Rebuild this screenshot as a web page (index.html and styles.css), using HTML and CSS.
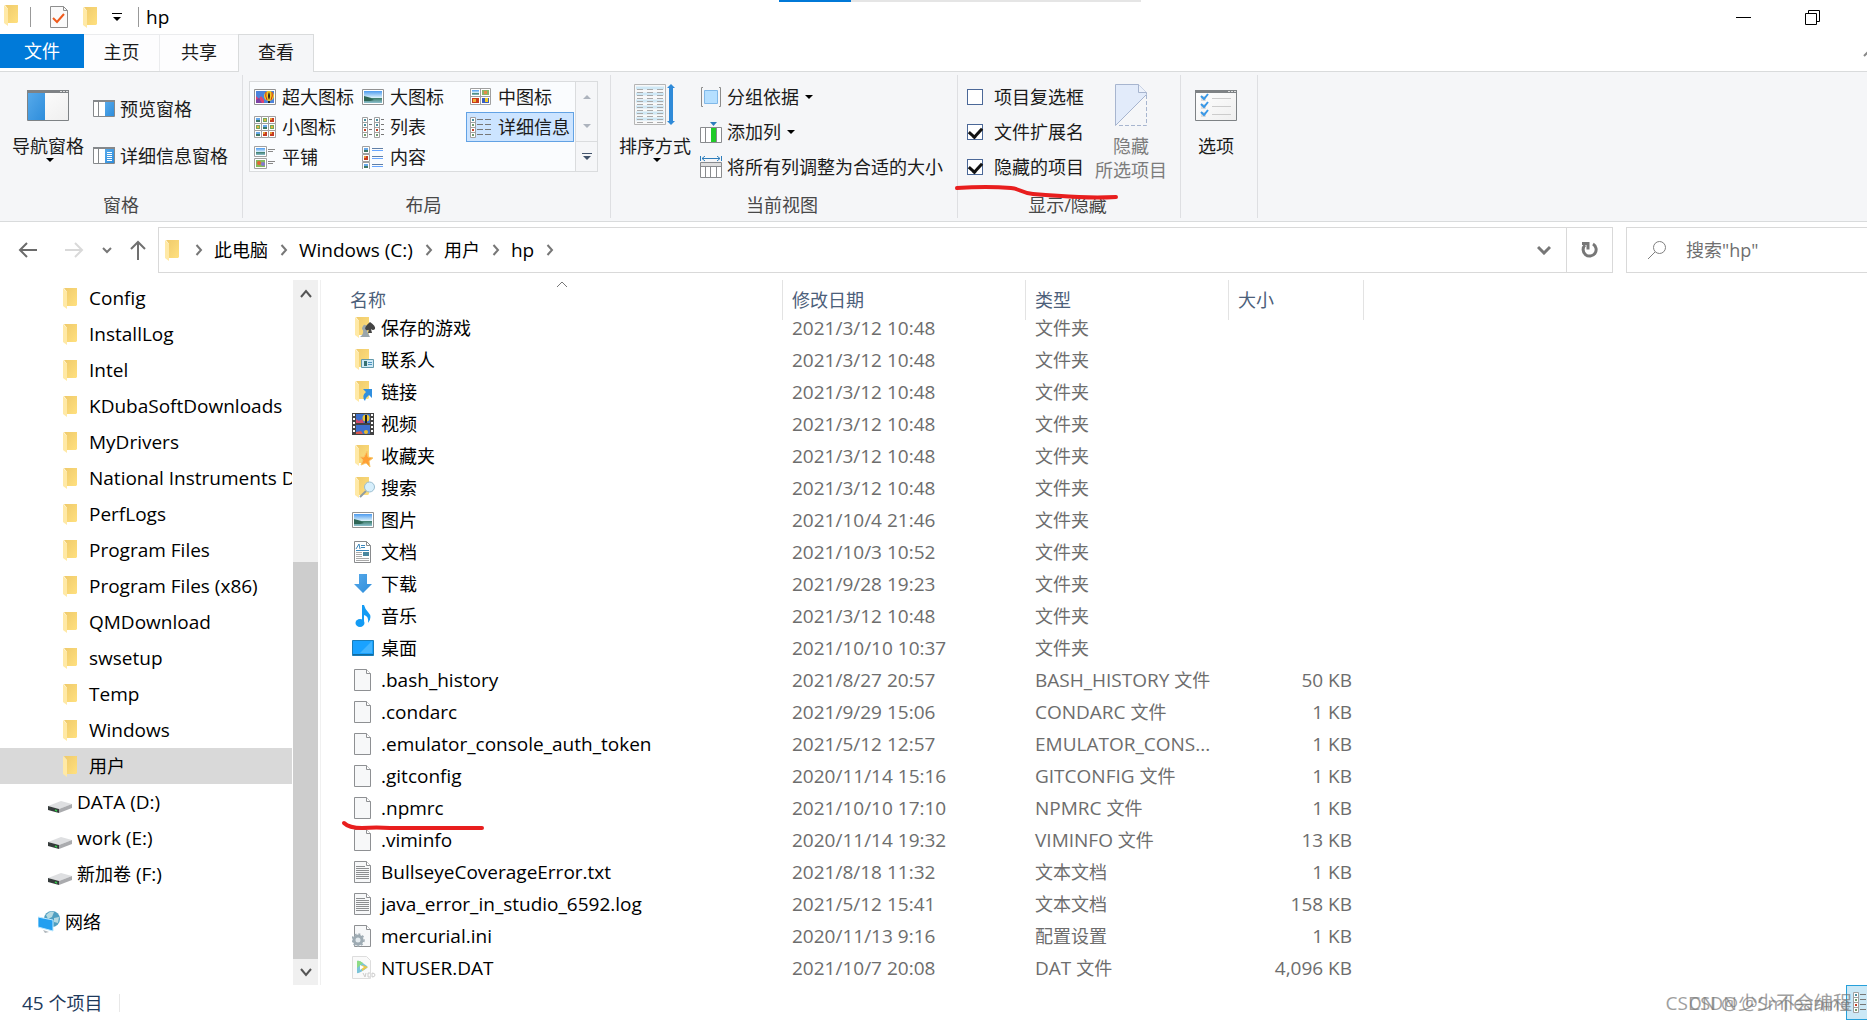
FILE: index.html
```html
<!DOCTYPE html>
<html lang="zh-CN">
<head>
<meta charset="utf-8">
<title>hp</title>
<link rel="stylesheet" href="styles.css">
</head>
<body>
<svg class="defs" aria-hidden="true">
  <defs>
    <linearGradient id="gold" x1="0" x2="1" y1="0" y2="1"><stop offset="0" stop-color="#efca6b"/><stop offset="1" stop-color="#ffe07f"/></linearGradient>
    <linearGradient id="blue" x1="0" x2="1" y1="0" y2="1"><stop offset="0" stop-color="#56a9ea"/><stop offset="1" stop-color="#2e8ddb"/></linearGradient>
    <linearGradient id="sky" x1="0" x2="0" y1="0" y2="1"><stop offset="0" stop-color="#4d9bef"/><stop offset=".55" stop-color="#d8effa"/><stop offset=".6" stop-color="#3f7d6a"/><stop offset="1" stop-color="#8cc0cf"/></linearGradient>
    <linearGradient id="paper" x1="0" x2="1" y1="0" y2="1"><stop offset="0" stop-color="#fff"/><stop offset="1" stop-color="#efefef"/></linearGradient>
  </defs>
  <symbol id="folder" viewBox="0 0 14 21"><path d="M1 0h13v17l-1 1H4V4z" fill="url(#gold)"/><path d="M0 0l4 4v17l-4-3z" fill="#ffe9a6"/></symbol>
  <symbol id="file" viewBox="0 0 24 24"><path d="M2.500 1.500h12l4 4v17h-16z" fill="#f7f8f9" stroke="#8e9093"/><path d="M14.500 1.500v4h4" fill="#fff" stroke="#8e9093"/></symbol>
  <symbol id="text" viewBox="0 0 24 24"><use href="#file"/><path d="M4 6.500h9M4 8.500h13M4 10.500h13M4 12.500h13M4 14.500h13M4 16.500h13M4 18.500h13" stroke="#8c8e90"/></symbol>
  <symbol id="picture" viewBox="0 0 22 16"><path d="M.5.500h21v15H.5z" fill="#fff" stroke="#929292"/><path d="M2 2h18v12H2z" fill="url(#sky)"/><path d="M2 7q6 1 10 4l-4 1H2z" fill="#2e6656"/></symbol>
  <symbol id="balloon" viewBox="0 0 22 16"><path d="M.5.500h21v15H.5z" fill="#fff" stroke="#929292"/><path d="M2 2h18v12H2z" fill="#4b83dc"/><path d="M2 7l3 3 2-3 3 4v3H2z" fill="#de4272"/><path d="M2 11l3-2 3 5H2z" fill="#7e42a5"/><ellipse cx="15" cy="7" rx="5" ry="5" fill="#f4cb22"/><path d="M12 3q-1 4 1 8M18 3q1 4-1 8" stroke="#c92b24" stroke-width="1" fill="none"/><path d="M15 3q-2 4 0 8 2-4 0-8" fill="#222"/><path d="M14 12h2v2h-2z" fill="#222"/></symbol>
  <symbol id="tiny" viewBox="0 0 8 8"><path d="M.5.500h7v7h-7z" fill="#fff" stroke="#a0a0a0"/><path d="M2 2h4v2H2z" fill="#67a8e8"/><path d="M2 4h4v2H2z" fill="#3d7868"/></symbol>
  <symbol id="tinyr" viewBox="0 0 8 8"><path d="M.5.500h7v7h-7z" fill="#fff" stroke="#a0a0a0"/><path d="M2 2h4v4H2z" fill="#c63b22"/><path d="M2 2h2v2H2z" fill="#e59b35"/></symbol>
  <symbol id="tinyg" viewBox="0 0 8 8"><path d="M.5.500h7v7h-7z" fill="#fff" stroke="#a0a0a0"/><path d="M2 2h4v4H2z" fill="#76a85a"/><path d="M3 3h2v2H3z" fill="#e5b441"/></symbol>
  <symbol id="medium" viewBox="0 0 22 18"><path d="M.5.500h20v16H.5zM10.500.500v16M.5 8.500h20" fill="#fff" stroke="#a0a0a0"/><path d="M2 2h7v5H2z" fill="url(#sky)"/><path d="M12 2h7v5h-7z" fill="#8cb56a"/><path d="M14 3h3v3h-3z" fill="#e58b49"/><path d="M2 10h7v5H2z" fill="#c93c1d"/><path d="M3 11h3v3H3z" fill="#efb238"/><path d="M12 10h7v5h-7z" fill="#395fc0"/><path d="M15 10h3v4h-3z" fill="#f1cb27"/></symbol>
  <symbol id="small" viewBox="0 0 22 22"><use href="#tiny" width="8" height="8"/><use href="#tinyg" x="7" width="8" height="8"/><use href="#tinyr" x="14" width="8" height="8"/><use href="#tinyg" y="7" width="8" height="8"/><use href="#tiny" x="7" y="7" width="8" height="8"/><use href="#tinyg" x="14" y="7" width="8" height="8"/><use href="#tiny" y="14" width="8" height="8"/><use href="#tinyr" x="7" y="14" width="8" height="8"/><use href="#tinyr" x="14" y="14" width="8" height="8"/></symbol>
  <symbol id="list" viewBox="0 0 22 21"><path d="M.5.500h5v20h-5zM12.500.500h5v20h-5zM.5 5.500h5M.5 10.500h5M.5 15.500h5M12.500 5.500h5M12.500 10.500h5M12.500 15.500h5" fill="#fff" stroke="#a0a0a0"/><path d="M2 3h2M2 8h2M14 3h2M14 8h2" stroke="#4b8e9f" stroke-width="2"/><path d="M2 13h2M14 13h2" stroke="#c34128" stroke-width="2"/><path d="M2 18h2M14 18h2" stroke="#719b70" stroke-width="2"/><path d="M7 2.500h3M7 7.500h3M7 12.500h3M7 17.500h3M19 2.500h3M19 7.500h3M19 12.500h3M19 17.500h3" stroke="#777"/></symbol>
  <symbol id="details" viewBox="0 0 22 21"><path d="M.5.500h5v20h-5zM.5 5.500h5M.5 10.500h5M.5 15.500h5" fill="#fff" stroke="#a0a0a0"/><path d="M2 3h2" stroke="#4b8e9f" stroke-width="2"/><path d="M2 8h2M2 18h2" stroke="#719b70" stroke-width="2"/><path d="M2 13h2" stroke="#c34128" stroke-width="2"/><path d="M7 2.500h6M7 7.500h6M7 12.500h6M7 17.500h6M15 2.500h6M15 7.500h6M15 12.500h6M15 17.500h6" stroke="#777"/></symbol>
  <symbol id="tiles" viewBox="0 0 22 23"><path d="M.5.500h12v10H.5zM.5 12.500h12v10H.5z" fill="#fff" stroke="#a0a0a0"/><path d="M2 2h9v7H2z" fill="url(#sky)"/><path d="M2 14h9v7H2z" fill="#86b95d"/><circle cx="5" cy="17" r="2" fill="#e36535"/><circle cx="9" cy="18" r="2" fill="#8577d0"/><path d="M14 3.500h7M14 5.500h5M14 15.500h7M14 17.500h5" stroke="#888"/></symbol>
  <symbol id="content" viewBox="0 0 22 23"><use href="#tiny" width="8" height="8"/><use href="#tinyr" y="8" width="8" height="8"/><use href="#tiny" y="16" width="8" height="8"/><path d="M10 2.500h11M10 10.500h11M10 18.500h11" stroke="#5f7fa8"/><path d="M10 4.500h11M10 12.500h11M10 20.500h11" stroke="#67a6ff"/></symbol>
  <symbol id="navpane" viewBox="0 0 42 31"><path d="M.5.500h41v30H.5z" fill="url(#paper)" stroke="#7e8285"/><path d="M0 0h42v3H0z" fill="#7e8285"/><path d="M1 3h17v27H1z" fill="url(#blue)"/><path d="M33 1.500h2M36 1.500h2M39 1.500h2" stroke="#ddd"/></symbol>
  <symbol id="preview" viewBox="0 0 22 17"><path d="M.5.500h21v16H.5zM5.500 2v15" fill="#fff" stroke="#85888b"/><path d="M0 0h22v2H0z" fill="#85888b"/><path d="M12 2h9v14h-9z" fill="url(#blue)"/></symbol>
  <symbol id="detpane" viewBox="0 0 22 17"><use href="#preview"/><path d="M14 5.500h5M14 7.500h5M14 9.500h5M14 11.500h5M14 13.500h5" stroke="#fff"/></symbol>
  <symbol id="sort" viewBox="0 0 42 42"><path d="M.5.500h31v40H.5z" fill="#f8f8f8" stroke="#b5b5b5"/><path d="M2 4h28M2 10h28M2 17h28M2 23h28M2 29h28M2 35h28" stroke="#cfe8f5" stroke-width="3"/><path d="M3 5.500h27M3 8.500h27M3 11.500h27M3 14.500h27M3 17.500h27M3 20.500h27M3 23.500h27M3 26.500h27M3 29.500h27M3 32.500h27M3 35.500h27M3 38.500h27" stroke="#aaa" stroke-dasharray="6 4"/><path d="M37 0l4 4h-2v33h2l-4 4-4-4h2V4h-2z" fill="#2f8ad8"/></symbol>
  <symbol id="group" viewBox="0 0 22 20"><path d="M3 .5H1.500v19H3M19 .5h1.500v19H19" fill="none" stroke="#8c8c8c"/><path d="M4.500 3.500h13v13h-13z" fill="#b5dfff" stroke="#80b8e8"/></symbol>
  <symbol id="addcol" viewBox="0 0 22 22"><path d="M.5 6.500h21v15H.5zM5.500 6v15M16.500 6v15" fill="#fff" stroke="#898b8e"/><path d="M11 7h5v14h-5z" fill="#21cb29"/><path d="M10 1h7l-3.500 4z" fill="#2d7dbb"/></symbol>
  <symbol id="fit" viewBox="0 0 22 22"><path d="M.5 6.500h21v15H.5zM.5 10.500h21M5.500 10v11M10.500 10v11M16.500 10v11" fill="#fff" stroke="#898b8e"/><path d="M1 7h20v3H1z" fill="#dedede"/><path d="M.5 0v5M21.500 0v5M2 2.500h18M5 0L2 2.500 5 5M17 0l3 2.500L17 5" fill="none" stroke="#2d7dbb"/></symbol>
  <symbol id="hide" viewBox="0 0 32 42"><path d="M.5 41.500V.5h23l8 8v2z" fill="#e2ebfa" stroke="#a7b5cf"/><path d="M23.500.500v8h8" fill="#edf2fb" stroke="#a7b5cf"/><path d="M31.500 11v30.500H2" fill="none" stroke="#a7b5cf" stroke-dasharray="4 2"/></symbol>
  <symbol id="options" viewBox="0 0 42 31"><path d="M.5.500h41v30H.5z" fill="url(#paper)" stroke="#7e8285"/><path d="M0 0h42v3H0z" fill="#7e8285"/><path d="M33 1.500h2M36 1.500h2M39 1.500h2" stroke="#ddd"/><path d="M17 8.500h19M17 16.500h19M17 24.500h19" stroke="#ccc"/><path d="M6 6h5v5H6zM6 14h5v5H6zM6 22h5v5H6z" fill="#dedede"/><path d="M6 6l3 3 4-5M6 14l3 3 4-5M6 22l3 3 4-5" fill="none" stroke="#3798e8" stroke-width="2"/></symbol>
  <symbol id="drive" viewBox="0 0 24 14"><path d="M0 6L13 1l11 3-13 5z" fill="#dedfe1"/><path d="M0 6l11 3v4L0 10z" fill="#353b3b"/><path d="M11 9l13-5v4l-13 5z" fill="#aaabae"/><path d="M7 10l2 1" stroke="#34ca4b" stroke-width="1.500"/></symbol>
  <symbol id="network" viewBox="0 0 22 22"><circle cx="14" cy="8" r="8" fill="#4f9fc1"/><path d="M8 4q4-5 8-3l-2 5-4 2zM16 7l5-1-1 6-4-1z" fill="#b6dae1"/><path d="M0 6l15 3v11L0 16z" fill="#229ff0" stroke="#bce8ff"/><path d="M5 19l6 2-4 1z" fill="#b1b8bd"/></symbol>
  <symbol id="chev" viewBox="0 0 8 12"><path d="M1.500 1L6 6l-4.500 5" fill="none" stroke="#777" stroke-width="2"/></symbol>
</svg>

<header class="titlebar">
  <svg class="i-folder"><use href="#folder"/></svg>
  <span class="bar"></span>
  <button class="plain" aria-label="属性"><svg width="18" height="22" viewBox="0 0 18 22"><path d="M.5.500h13l4 4v17H.5z" fill="#fafafa" stroke="#8e8e8e"/><path d="M13.500.500v4h4" fill="none" stroke="#8e8e8e"/><path d="M3 12l4 4 7-8" fill="none" stroke="#ef5a1c" stroke-width="2"/></svg></button>
  <button class="plain" aria-label="新建文件夹"><svg class="i-folder"><use href="#folder"/></svg></button>
  <button class="plain more" aria-label="自定义"><svg width="10" height="9" viewBox="0 0 10 9"><path d="M0 .5h10" stroke="#000"/><path d="M1 4h8L5 8z"/></svg></button>
  <span class="bar"></span>
  <h1>hp</h1>
  <div class="winbtns">
    <button class="plain" aria-label="最小化"><svg width="15" height="15"><path d="M0 7.500h15" stroke="#000"/></svg></button>
    <button class="plain" aria-label="还原"><svg width="15" height="15"><path d="M.5 3.500h11v11H.5zM3.500 3V.5h11v11H12" fill="none" stroke="#000"/></svg></button>
  </div>
  <div class="progress"></div>
</header>

<nav class="tabs">
  <button class="tab file">文件</button><button class="tab">主页</button><button class="tab wide">共享</button><button class="tab on">查看</button>
  <button class="plain collapse" aria-label="收起功能区"><svg width="12" height="8"><path d="M1 7l5-5 5 5" fill="none" stroke="#888" stroke-width="2"/></svg></button>
</nav>

<section class="ribbon">
  <div class="group g-pane">
    <div class="tools">
      <button class="big"><span class="pic"><svg width="42" height="31"><use href="#navpane"/></svg></span>导航窗格<i class="down"></i></button>
      <div class="stack wide">
        <button class="cmd"><svg width="22" height="17"><use href="#preview"/></svg>预览窗格</button>
        <button class="cmd"><svg width="22" height="17"><use href="#detpane"/></svg>详细信息窗格</button>
      </div>
    </div>
    <h2>窗格</h2>
  </div>
  <div class="group g-layout">
    <div class="gallery">
      <div class="grid">
        <button class="cmd"><svg width="22" height="16"><use href="#balloon"/></svg>超大图标</button>
        <button class="cmd"><svg width="22" height="16"><use href="#picture"/></svg>大图标</button>
        <button class="cmd"><svg width="22" height="18"><use href="#medium"/></svg>中图标</button>
        <button class="cmd"><svg width="22" height="22"><use href="#small"/></svg>小图标</button>
        <button class="cmd"><svg width="22" height="21"><use href="#list"/></svg>列表</button>
        <button class="cmd on"><svg width="22" height="21"><use href="#details"/></svg>详细信息</button>
        <button class="cmd"><svg width="22" height="23"><use href="#tiles"/></svg>平铺</button>
        <button class="cmd"><svg width="22" height="23"><use href="#content"/></svg>内容</button>
      </div>
      <div class="spin">
        <button class="plain" aria-label="上"><svg width="8" height="4"><path d="M0 4h8L4 0z" fill="#adb3bd"/></svg></button>
        <button class="plain" aria-label="下"><svg width="8" height="4"><path d="M0 0h8L4 4z" fill="#adb3bd"/></svg></button>
        <button class="plain" aria-label="更多"><svg width="10" height="8"><path d="M0 .5h10" stroke="#42536b"/><path d="M1 3h8L5 7z" fill="#42536b"/></svg></button>
      </div>
    </div>
    <h2>布局</h2>
  </div>
  <div class="group g-view">
    <div class="tools">
      <button class="big"><span class="pic"><svg width="42" height="42"><use href="#sort"/></svg></span>排序方式<i class="down"></i></button>
      <div class="stack">
        <button class="cmd"><svg width="22" height="20"><use href="#group"/></svg>分组依据<i class="down"></i></button>
        <button class="cmd"><svg width="22" height="22"><use href="#addcol"/></svg>添加列<i class="down"></i></button>
        <button class="cmd"><svg width="22" height="22"><use href="#fit"/></svg>将所有列调整为合适的大小</button>
      </div>
    </div>
    <h2>当前视图</h2>
  </div>
  <div class="group g-show">
    <div class="tools">
      <div class="stack checks">
        <label><input type="checkbox">项目复选框</label>
        <label><input type="checkbox" checked>文件扩展名</label>
        <label><input type="checkbox" checked>隐藏的项目</label>
      </div>
      <button class="big off" disabled><span class="pic"><svg width="32" height="42"><use href="#hide"/></svg></span><span>隐藏</span><span>所选项目</span></button>
    </div>
    <h2>显示/隐藏</h2>
    <svg class="mark" width="166" height="18"><path d="M3 5q30-2 54 0c10 1 10 5 22 6q26 2 46 3 18 1 37 0" fill="none" stroke="#e81e1e" stroke-width="4" stroke-linecap="round"/></svg>
  </div>
  <div class="group g-opt">
    <div class="tools"><button class="big"><span class="pic"><svg width="42" height="31"><use href="#options"/></svg></span>选项</button></div>
  </div>
</section>

<div class="address">
  <div class="moves">
    <button class="plain" aria-label="后退"><svg width="20" height="16"><path d="M19 8H2M9 1L2 8l7 7" fill="none" stroke="#6b6b6b" stroke-width="2"/></svg></button>
    <button class="plain" aria-label="前进"><svg width="20" height="16"><path d="M1 8h17M11 1l7 7-7 7" fill="none" stroke="#d9d9d9" stroke-width="2"/></svg></button>
    <button class="plain" aria-label="最近"><svg width="10" height="7"><path d="M1 1l4 4 4-4" fill="none" stroke="#777" stroke-width="2"/></svg></button>
    <button class="plain" aria-label="上移"><svg width="16" height="20"><path d="M8 20V2M1 9l7-7 7 7" fill="none" stroke="#707070" stroke-width="2"/></svg></button>
  </div>
  <div class="path">
    <svg class="i-folder"><use href="#folder"/></svg>
    <svg class="chev"><use href="#chev"/></svg><a href="#">此电脑</a>
    <svg class="chev"><use href="#chev"/></svg><a href="#" class="en">Windows (C:)</a>
    <svg class="chev"><use href="#chev"/></svg><a href="#">用户</a>
    <svg class="chev"><use href="#chev"/></svg><a href="#" class="en">hp</a>
    <svg class="chev"><use href="#chev"/></svg>
    <button class="plain drop" aria-label="历史"><svg width="14" height="10"><path d="M1 2l6 6 6-6" fill="none" stroke="#777" stroke-width="3"/></svg></button>
    <button class="plain reload" aria-label="刷新"><svg width="18" height="18"><path d="M12 3a6.500 6.500 0 1 1-8 1" fill="none" stroke="#777" stroke-width="3"/><path d="M1 2.500h6v6" fill="none" stroke="#777" stroke-width="3"/></svg></button>
  </div>
  <div class="search">
    <svg width="20" height="20"><circle cx="12.500" cy="7.500" r="6" fill="none" stroke="#808080"/><path d="M8 12l-7 7" stroke="#808080"/></svg>
    <input type="text" aria-label="搜索" placeholder='搜索"hp"'>
  </div>
</div>

<main>
  <nav class="tree">
    <a href="#"><svg class="i-folder"><use href="#folder"/></svg>Config</a>
    <a href="#"><svg class="i-folder"><use href="#folder"/></svg>InstallLog</a>
    <a href="#"><svg class="i-folder"><use href="#folder"/></svg>Intel</a>
    <a href="#"><svg class="i-folder"><use href="#folder"/></svg>KDubaSoftDownloads</a>
    <a href="#"><svg class="i-folder"><use href="#folder"/></svg>MyDrivers</a>
    <a href="#"><svg class="i-folder"><use href="#folder"/></svg>National Instruments Downloads</a>
    <a href="#"><svg class="i-folder"><use href="#folder"/></svg>PerfLogs</a>
    <a href="#"><svg class="i-folder"><use href="#folder"/></svg>Program Files</a>
    <a href="#"><svg class="i-folder"><use href="#folder"/></svg>Program Files (x86)</a>
    <a href="#"><svg class="i-folder"><use href="#folder"/></svg>QMDownload</a>
    <a href="#"><svg class="i-folder"><use href="#folder"/></svg>swsetup</a>
    <a href="#"><svg class="i-folder"><use href="#folder"/></svg>Temp</a>
    <a href="#"><svg class="i-folder"><use href="#folder"/></svg>Windows</a>
    <a href="#" class="on"><svg class="i-folder"><use href="#folder"/></svg><span class="zh">用户</span></a>
    <a href="#" class="disk"><svg width="24" height="14"><use href="#drive"/></svg>DATA (D:)</a>
    <a href="#" class="disk"><svg width="24" height="14"><use href="#drive"/></svg>work (E:)</a>
    <a href="#" class="disk"><svg width="24" height="14"><use href="#drive"/></svg><span><span class="zh">新加卷</span> (F:)</span></a>
    <a href="#" class="net"><svg width="22" height="22"><use href="#network"/></svg><span class="zh">网络</span></a>
  </nav>
  <div class="scroll">
    <button class="plain" aria-label="向上滚动"><svg width="12" height="10"><path d="M1 8l5-6 5 6" fill="none" stroke="#555" stroke-width="2"/></svg></button>
    <div class="track"><div class="thumb"></div></div>
    <button class="plain" aria-label="向下滚动"><svg width="12" height="10"><path d="M1 2l5 6 5-6" fill="none" stroke="#555" stroke-width="2"/></svg></button>
  </div>
  <section class="files">
    <table>
      <colgroup><col class="c-name"><col class="c-date"><col class="c-type"><col class="c-size"></colgroup>
      <thead><tr><th>名称<svg class="asc" width="12" height="7"><path d="M1 6l5-5 5 5" fill="none" stroke="#777"/></svg></th><th>修改日期</th><th>类型</th><th>大小</th></tr></thead>
      <tbody>
        <tr><td><svg class="ic" viewBox="0 0 24 24"><use href="#folder" x="3" y="1" width="14" height="21"/><path d="M8 21q4-3 3-7-2-1 0-4 2-3 4 1 1 2 0 4l3 6z" fill="#9aa6ab"/><path d="M18 6q-7 6-4 8 3 1 3-1l-1 4h4l-1-4q2 2 4 0 1-3-5-7z" fill="#444"/></svg>保存的游戏</td><td>2021/3/12 10:48</td><td class="zh">文件夹</td><td></td></tr>
        <tr><td><svg class="ic" viewBox="0 0 24 24"><use href="#folder" x="3" y="1" width="14" height="21"/><path d="M9.500 11.500h12v8h-12z" fill="#cfe9f6" stroke="#6399aa"/><path d="M12 13h3v5h-3z" fill="#377071"/><path d="M16 14.500h4M16 16.500h4" stroke="#4c93bf"/></svg>联系人</td><td>2021/3/12 10:48</td><td class="zh">文件夹</td><td></td></tr>
        <tr><td><svg class="ic" viewBox="0 0 24 24"><use href="#folder" x="3" y="1" width="14" height="21"/><path d="M11 9h9v9l-3-3q-3 2-4 6-4-5 1-9z" fill="#318fde"/></svg>链接</td><td>2021/3/12 10:48</td><td class="zh">文件夹</td><td></td></tr>
        <tr><td><svg class="ic" viewBox="0 0 24 24"><path d="M0 1h22v22H0z" fill="#444"/><path d="M4 2h14v9H4zM4 13h14v9H4z" fill="#3d70cd"/><path d="M4 7l3 2 3-2 2 4H4z" fill="#d14a6c"/><circle cx="14" cy="6" r="3.500" fill="#efc52c"/><path d="M14 3v8" stroke="#222" stroke-width="2"/><path d="M4 20l5-1 2 3H4z" fill="#d9584e"/><circle cx="14" cy="20" r="2" fill="#e9bb2c"/><path d="M2 2v20M20 2v20" stroke="#fff" stroke-width="2" stroke-dasharray="2 2"/></svg>视频</td><td>2021/3/12 10:48</td><td class="zh">文件夹</td><td></td></tr>
        <tr><td><svg class="ic" viewBox="0 0 24 24"><use href="#folder" x="3" y="1" width="14" height="21"/><path d="M15 7l1 6 5 1-4 3 1 6-4-4-5 2 2-5-3-3h4z" fill="#ff9f34" stroke="#f7c76b"/></svg>收藏夹</td><td>2021/3/12 10:48</td><td class="zh">文件夹</td><td></td></tr>
        <tr><td><svg class="ic" viewBox="0 0 24 24"><use href="#folder" x="3" y="1" width="14" height="21"/><path d="M14 15l-6 6" stroke="#909da2" stroke-width="2"/><circle cx="17.500" cy="11" r="5" fill="#d7effc" stroke="#9abdcf"/></svg>搜索</td><td>2021/3/12 10:48</td><td class="zh">文件夹</td><td></td></tr>
        <tr><td><svg class="ic" viewBox="0 0 24 24"><use href="#picture" y="4" width="22" height="16"/></svg>图片</td><td>2021/10/4 21:46</td><td class="zh">文件夹</td><td></td></tr>
        <tr><td><svg class="ic" viewBox="0 0 24 24"><path d="M2.500 1.500h12l4 4v17h-16z" fill="#fff" stroke="#898b8d"/><path d="M14.500 1.500v4h4" fill="none" stroke="#898b8d"/><path d="M4 9l3-5 1 5M9 5.500h4M9 7.500h4M4 10.500h13" fill="none" stroke="#3b87bb"/><path d="M11 12h6v4h-6z" fill="#49879e"/><path d="M4 12.500h6M4 14.500h6M4 16.500h6M4 18.500h13M4 20.500h13" stroke="#aaa"/></svg>文档</td><td>2021/10/3 10:52</td><td class="zh">文件夹</td><td></td></tr>
        <tr><td><svg class="ic" viewBox="0 0 24 24"><path d="M7 2h8v10h5l-9 9-9-9h5z" fill="url(#blue)"/></svg>下载</td><td>2021/9/28 19:23</td><td class="zh">文件夹</td><td></td></tr>
        <tr><td><svg class="ic" viewBox="0 0 24 24"><ellipse cx="8" cy="19" rx="4.500" ry="4" fill="#139bf4"/><path d="M10 19V1h2q1 4 4 7 5 5 0 11 1-7-4-8v8z" fill="#139bf4"/></svg>音乐</td><td>2021/3/12 10:48</td><td class="zh">文件夹</td><td></td></tr>
        <tr><td><svg class="ic" viewBox="0 0 24 24"><path d="M.5 4.500h21v15H.5z" fill="#19a2ff" stroke="#197db9"/><path d="M8 17L20 5v12z" fill="#43b5ff"/><path d="M1 18.500h20" stroke="#116b9f"/></svg>桌面</td><td>2021/10/10 10:37</td><td class="zh">文件夹</td><td></td></tr>
        <tr><td class="en"><svg class="ic"><use href="#file"/></svg>.bash_history</td><td>2021/8/27 20:57</td><td>BASH_HISTORY <span class="zh">文件</span></td><td>50 KB</td></tr>
        <tr><td class="en"><svg class="ic"><use href="#file"/></svg>.condarc</td><td>2021/9/29 15:06</td><td>CONDARC <span class="zh">文件</span></td><td>1 KB</td></tr>
        <tr><td class="en"><svg class="ic"><use href="#file"/></svg>.emulator_console_auth_token</td><td>2021/5/12 12:57</td><td>EMULATOR_CONS...</td><td>1 KB</td></tr>
        <tr><td class="en"><svg class="ic"><use href="#file"/></svg>.gitconfig</td><td>2020/11/14 15:16</td><td>GITCONFIG <span class="zh">文件</span></td><td>1 KB</td></tr>
        <tr><td class="en"><svg class="ic"><use href="#file"/></svg>.npmrc<svg class="under" width="144" height="12"><path d="M3 3q5 5 18 5 15-1 28 0h92" fill="none" stroke="#e81e1e" stroke-width="4" stroke-linecap="round"/></svg></td><td>2021/10/10 17:10</td><td>NPMRC <span class="zh">文件</span></td><td>1 KB</td></tr>
        <tr><td class="en"><svg class="ic"><use href="#file"/></svg>.viminfo</td><td>2020/11/14 19:32</td><td>VIMINFO <span class="zh">文件</span></td><td>13 KB</td></tr>
        <tr><td class="en"><svg class="ic"><use href="#text"/></svg>BullseyeCoverageError.txt</td><td>2021/8/18 11:32</td><td class="zh">文本文档</td><td>1 KB</td></tr>
        <tr><td class="en"><svg class="ic"><use href="#text"/></svg>java_error_in_studio_6592.log</td><td>2021/5/12 15:41</td><td class="zh">文本文档</td><td>158 KB</td></tr>
        <tr><td class="en"><svg class="ic" viewBox="0 0 24 24"><use href="#file" width="24" height="24"/><circle cx="6" cy="16" r="4" fill="#e3eaee" stroke="#9eabb3" stroke-width="3"/><circle cx="6" cy="16" r="6" fill="none" stroke="#9eabb3" stroke-width="1.500" stroke-dasharray="2 2"/></svg>mercurial.ini</td><td>2020/11/13 9:16</td><td class="zh">配置设置</td><td>1 KB</td></tr>
        <tr><td class="en"><svg class="ic" viewBox="0 0 24 24"><path d="M.5.500h14l4 4v18H.5z" fill="#fafafa" stroke="#ddd"/><path d="M5 5q2-1 10 5 1 1 0 2-8 6-10 5z" fill="#7bc4d9"/><path d="M5 5q2-1 6 2l-6 5z" fill="#8ddc86"/><path d="M10 9l6 2-6 4z" fill="#eec84a"/><path d="M8 9l4 2-4 3z" fill="#fff"/><path d="M11 17l2 4 1-4M18 17h-2v4h2M20 17v4q3 0 3-2t-3-2" fill="none" stroke="#ccc"/></svg>NTUSER.DAT</td><td>2021/10/7 20:08</td><td>DAT <span class="zh">文件</span></td><td>4,096 KB</td></tr>
      </tbody>
    </table>
  </section>
</main>

<footer><span><span class="en">45</span> 个项目</span>
  <button class="viewmode" aria-label="详细信息"><svg width="22" height="21"><use href="#details"/></svg></button>
  <span class="wm wm-a">CSDN @少少不会编程</span>
  <span class="wm wm-b">CSDN @Smileanine</span>
</footer>
</body>
</html>
```
FILE: styles.css
```css
* { box-sizing: border-box; }
body {
  margin: 0;
  min-height: 100vh;
  display: flex;
  flex-direction: column;
  overflow-x: hidden;
  background: #fff;
  color: #1b1b1b;
  font: 400 18px/24px "Open Sans", "Noto Sans CJK SC", sans-serif;
}
button, input { font: inherit; color: inherit; }
button { border: 0; padding: 0; background: none; white-space: nowrap; }
a { color: inherit; text-decoration: none; }
svg { flex: none; display: block; }
h1, h2 { margin: 0; font-weight: inherit; }
.defs { position: absolute; width: 0; height: 0; }
.plain { display: flex; align-items: center; justify-content: center; }
.i-folder { width: 14px; height: 21px; }
.en { font-size: 19px; }
.zh { font-size: 18px; }
.down { width: 0; height: 0; border: 4px solid transparent; border-top-color: #000; border-bottom: 0; }

/* title bar */
.titlebar { position: relative; display: flex; align-items: center; height: 34px; padding: 0 47px 0 4px; }
.titlebar > .i-folder { margin-bottom: 4px; }
.titlebar .bar { width: 1px; height: 20px; margin: 0 19px 0 12px; background: #999; }
.titlebar .plain + .plain { margin-left: 15px; }
.titlebar .bar + h1 { margin-left: -12px; font-size: 19px; color: #000; }
.titlebar .more + .bar { margin-left: 16px; }
.winbtns { display: flex; margin-left: auto; }
.winbtns .plain + .plain { margin-left: 54px; }
.progress { position: absolute; left: 779px; top: 0; width: 362px; height: 2px; background: linear-gradient(90deg, #0078d7 72px, #e5e5e5 72px); }

/* tabs */
.tabs { display: flex; height: 38px; border-bottom: 1px solid #d9dbdc; }
.tab { width: 76px; height: 37px; padding-bottom: 2px; border: 1px solid #ebecee; border-width: 1px 1px 0 0; background: #fdfdfe; }
.tab.wide { width: 78px; border-right: 0; }
.tab.file { width: 84px; height: 34px; padding: 0; border: 0; background: #007ad9; color: #fff; }
.tab.on { height: 38px; padding-bottom: 3px; border: 1px solid #d9dbdc; border-bottom: 0; background: #f5f6f8; }
.collapse { margin: 0 -8px 0 auto; }

/* ribbon */
.ribbon { display: flex; height: 150px; padding: 3px 0; background: #f5f6f8; border-bottom: 1px solid #d9dbdc; }
.group { position: relative; display: flex; flex-direction: column; justify-content: space-between; border-right: 1px solid #dedfe2; }
.group h2 { font-size: 18px; text-align: center; color: #484848; line-height: 26px; }
.g-pane { width: 243px; padding-left: 12px; }
.g-pane h2 { margin-left: -12px; }
.g-layout { width: 368px; padding: 7px 12px 0 6px; }
.g-view { width: 347px; padding-left: 8px; }
.g-show { width: 223px; padding-left: 9px; }
.g-view h2, .g-show h2 { margin: 0 4px 0 -8px; }
.g-opt { width: 77px; padding-left: 14px; }
.tools { display: flex; }
.big { display: flex; flex-direction: column; align-items: center; padding-top: 8px; line-height: 24px; }
.big .pic { display: flex; align-items: center; height: 44px; margin-bottom: 7px; }
.big .down { margin-left: 4px; }
.big.off { margin-left: 11px; color: #7c7c7c; }
.stack { display: flex; flex-direction: column; align-items: flex-start; margin-left: 9px; padding-top: 4px; }
.stack > * { height: 35px; }
.stack.wide { padding-top: 10px; }
.stack.wide > * { height: 47px; }
.cmd { display: flex; align-items: center; gap: 5px; }
.cmd .down { margin-left: 1px; }
.stack.checks { margin-left: 0; }
.checks label { display: flex; align-items: center; gap: 11px; white-space: nowrap; }
input[type=checkbox] { appearance: none; flex: none; width: 16px; height: 16px; margin: 0; border: 1px solid #4b6898; background: #fff; }
input[type=checkbox]:checked { display: grid; place-items: center; }
input[type=checkbox]:checked::before { content: ""; width: 6px; height: 10px; border: solid #111; border-width: 0 3px 3px 0; transform: rotate(42deg); margin-bottom: 3px; }
.mark { position: absolute; left: -4px; top: 108px; }
.gallery { display: flex; height: 91px; margin-top: -1px; border: 1px solid #dadcde; background: #fafcfe; }
.grid { flex: 1; display: grid; grid-template-columns: 108px 104px 108px; grid-template-rows: 30px 30px 30px; padding-left: 4px; }
.grid .cmd { gap: 6px; }
.grid .cmd:nth-child(3n) { padding-left: 3px; border: 1px solid transparent; }
.grid .cmd.on { background: #cce4ff; border-color: #62a2e4; }
.spin { display: flex; flex-direction: column; width: 22px; border-left: 1px solid #dadcde; background: #f5f6f8; }
.spin .plain { height: 30px; }
.spin .plain:last-child { border-top: 1px solid #dadcde; }

/* address bar */
.address { display: flex; height: 58px; padding-top: 5px; color: #000; }
.moves { display: flex; align-items: center; width: 158px; height: 46px; padding-left: 18px; }
.moves .plain + .plain { margin-left: 18px; }
.moves .plain:nth-child(1) { margin-right: 8px; }
.path { flex: 1; display: flex; align-items: center; height: 46px; padding-left: 6px; border: 1px solid #d9d9d9; line-height: 44px; }
.path a { margin-left: 11px; }
.path a + .chev { margin-left: 12px; }
.chev { width: 8px; height: 12px; margin-left: 16px; }
.drop { margin-left: auto; width: 45px; }
.reload { width: 46px; height: 44px; border-left: 1px solid #d9d9d9; }
.search { display: flex; align-items: center; gap: 19px; width: 255px; height: 46px; margin: 0 -14px 0 13px; padding-left: 20px; border: 1px solid #d9d9d9; }
.search input { flex: 1; min-width: 0; border: 0; padding: 0; outline: 0; background: none; }
.search input::placeholder { color: #6f6f6f; opacity: 1; }

/* tree and files */
main { flex: 1; display: flex; color: #000; }
.tree { width: 292px; overflow: hidden; font-size: 19px; font-weight: 370; }
.tree a { display: flex; align-items: center; gap: 12px; height: 36px; padding-left: 63px; white-space: nowrap; }
.tree a.on { background: #d9d9d9; }
.tree a.disk { padding-left: 48px; gap: 5px; }
.tree a.disk svg { margin-top: 10px; }
.tree a.net { margin-top: 12px; padding-left: 38px; gap: 5px; }
.scroll { display: flex; flex-direction: column; width: 25px; margin: 0 2px 0 1px; background: #f0f0f0; }
.scroll .plain { height: 28px; }
.scroll .plain:last-child { height: 26px; }
.track { flex: 1; display: flex; flex-direction: column; justify-content: flex-end; }
.thumb { height: 61%; background: #cdcdcd; }
.files { flex: 1; border-left: 1px solid #f0f0f0; }
table { width: 1043px; table-layout: fixed; border-collapse: collapse; }
.c-name { width: 462px; }
.c-date { width: 243px; }
.c-type { width: 203px; }
.c-size { width: 135px; }
th, td { position: relative; height: 32px; padding: 0 0 0 9px; text-align: left; font-weight: inherit; white-space: nowrap; }
th { padding-top: 8px; color: #4c607a; }
th:first-child { padding-left: 29px; }
th::after { content: ""; position: absolute; right: 0; top: 0; width: 1px; height: 40px; background: #e3e3e3; }
.asc { position: absolute; left: 235px; top: 1px; }
td { color: #6d6d6d; font-size: 19px; }
td.zh { font-size: 18px; }
td:first-child { padding-left: 60px; color: #000; font-size: 18px; }
td.en:first-child { font-size: 19px; font-weight: 370; }
td:last-child { padding: 0 12px 0 0; text-align: right; }
.ic { position: absolute; left: 31px; top: 4px; width: 24px; height: 24px; }
.under { position: absolute; left: 20px; top: 28px; z-index: 1; }

/* status bar */
footer { position: relative; display: flex; align-items: center; justify-content: space-between; height: 35px; padding-left: 22px; color: #1e395b; }
footer > span:first-child { padding-right: 17px; border-right: 1px solid #e8e8e8; line-height: 18px; }
.viewmode { display: flex; align-items: center; width: 21px; height: 35px; padding-left: 6px; overflow: hidden; border: 1px solid #26a0da; border-right: 0; background: #cbe8f6; }
.wm { position: absolute; bottom: 5px; color: #777; opacity: .7; white-space: nowrap; font-size: 19px; }
.wm-a { right: 15px; }
.wm-b { right: 17px; font-size: 18px; }
```
